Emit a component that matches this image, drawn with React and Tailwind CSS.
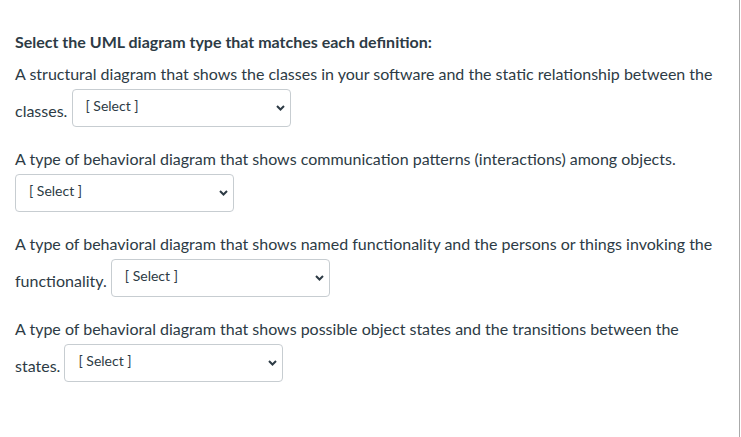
import React from 'react';

const questions = [
  { text: 'A structural diagram that shows the classes in your software and the static relationship between the classes.' },
  { text: 'A type of behavioral diagram that shows communication patterns (interactions) among objects.' },
  { text: 'A type of behavioral diagram that shows named functionality and the persons or things invoking the functionality.' },
  { text: 'A type of behavioral diagram that shows possible object states and the transitions between the states.' },
];

function Dropdown() {
  return (
    <span className="inline-flex items-start justify-between w-[219px] h-[38px] mt-[3px] align-[5.5px] pl-[13px] pr-[5px] pt-[6px] border border-[#c7cdd1] rounded-[4px] bg-white">
      <span className="text-[14px] leading-[20px] text-[#2d3b45]">[ Select ]</span>
      <svg className="self-center mt-[-6px]" width="9" height="6" viewBox="0 0 9 6" fill="none">
        <path d="M1 1L4.5 4.5L8 1" stroke="#2d3b45" strokeWidth="2" />
      </svg>
    </span>
  );
}

export default function App() {
  return (
    <div className="w-[741px] h-[437px] bg-white font-['Lato','Liberation_Sans',sans-serif] text-[#2d3b45]">
      <div className="w-[740px] h-full border-r border-[#aaaaaa] pt-[30px] pl-[15px]">
        <div className="w-[710px]">
          <p className="font-bold text-base leading-6 mb-[8px]">
            Select the UML diagram type that matches each definition:
          </p>
          {questions.map((q, i) => (
            <p key={i} className="text-base leading-6 mb-[20px]">
              {q.text} <Dropdown />
            </p>
          ))}
        </div>
      </div>
    </div>
  );
}
